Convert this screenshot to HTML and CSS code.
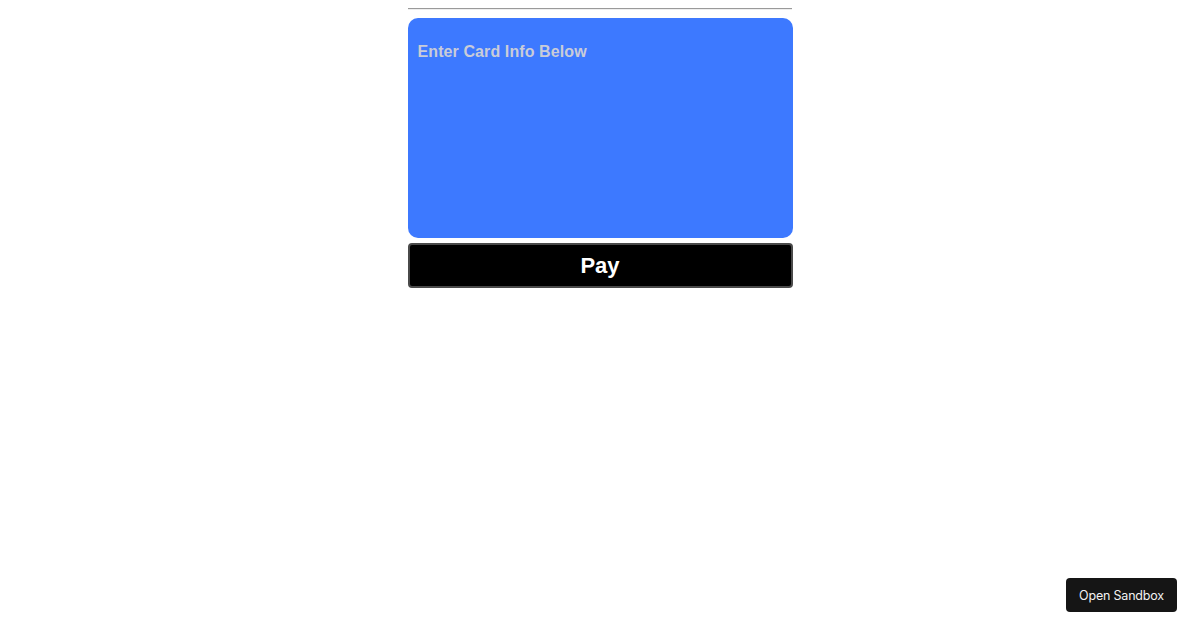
FILE: index.html
```html
<!DOCTYPE html>
<html>
<head>
<meta charset="utf-8">
<link rel="stylesheet" href="styles.css">
</head>
<body>
<div class="wrap">
  <hr class="rule">
  <div class="card">
    <p class="card-label">Enter Card Info Below</p>
  </div>
  <button class="pay">Pay</button>
</div>
<button class="sandbox">Open Sandbox</button>
</body>
</html>
```
FILE: styles.css
```css
html, body { margin: 0; padding: 0; background: #fff; }
body { font-family: "Liberation Sans", Arial, sans-serif; padding: 8px; }
.wrap { width: 385px; margin: 0 auto; display: flex; flex-direction: column; }
.rule { width: 384px; margin: 0 0 8px 0; border: none; border-top: 1px solid #9a9a9a; border-bottom: 1px solid #eeeeee; height: 0; }
.card { height: 220px; background: #3d79ff; border-radius: 10px; padding: 25px 10px 0; box-sizing: border-box; }
.card-label { margin: 0; font-size: 16px; font-weight: bold; color: #c9ccd8; letter-spacing: 0.1px; }
.pay { margin-top: 5px; height: 45px; background: #000; color: #fff; border: 2px solid #4a4a4a; border-radius: 4px; font-family: "Liberation Sans", Arial, sans-serif; font-size: 22px; font-weight: bold; padding: 0; }
.sandbox { position: fixed; right: 23px; bottom: 18px; width: 111px; height: 34px; background: #151515; color: #f2f2f2; border: none; border-radius: 4px; font-family: Inter, "Liberation Sans", sans-serif; font-size: 12.5px; letter-spacing: -0.2px; padding: 0; }
```
